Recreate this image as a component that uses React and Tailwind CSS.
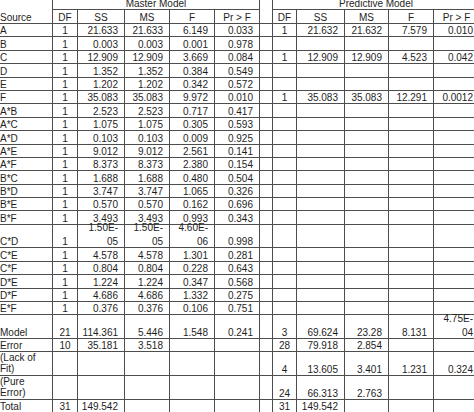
import React from 'react';

// column widths: Source, DF, SS, MS, F, Pr>F, gap, DF, SS, MS, F, Pr>F
const W = ['w-[53px]', 'w-[25px]', 'w-[47px]', 'w-[45px]', 'w-[45px]', 'w-[45px]', 'w-[13px]', 'w-[24px]', 'w-[48px]', 'w-[44px]', 'w-[45px]', 'w-[46px]'];

const rows = [
  { s: 'A', m: ['1', '21.633', '21.633', '6.149', '0.033'], p: ['1', '21.632', '21.632', '7.579', '0.010'] },
  { s: 'B', m: ['1', '0.003', '0.003', '0.001', '0.978'] },
  { s: 'C', m: ['1', '12.909', '12.909', '3.669', '0.084'], p: ['1', '12.909', '12.909', '4.523', '0.042'] },
  { s: 'D', m: ['1', '1.352', '1.352', '0.384', '0.549'] },
  { s: 'E', m: ['1', '1.202', '1.202', '0.342', '0.572'] },
  { s: 'F', m: ['1', '35.083', '35.083', '9.972', '0.010'], p: ['1', '35.083', '35.083', '12.291', '0.0012'] },
  { s: 'A*B', m: ['1', '2.523', '2.523', '0.717', '0.417'] },
  { s: 'A*C', m: ['1', '1.075', '1.075', '0.305', '0.593'] },
  { s: 'A*D', m: ['1', '0.103', '0.103', '0.009', '0.925'] },
  { s: 'A*E', m: ['1', '9.012', '9.012', '2.561', '0.141'] },
  { s: 'A*F', m: ['1', '8.373', '8.373', '2.380', '0.154'] },
  { s: 'B*C', m: ['1', '1.688', '1.688', '0.480', '0.504'] },
  { s: 'B*D', m: ['1', '3.747', '3.747', '1.065', '0.326'] },
  { s: 'B*E', m: ['1', '0.570', '0.570', '0.162', '0.696'] },
  { s: 'B*F', m: ['1', '3.493', '3.493', '0.993', '0.343'] },
  { s: 'C*D', tall: true, m: ['1', ['1.50E-', '05'], ['1.50E-', '05'], ['4.60E-', '06'], '0.998'] },
  { s: 'C*E', m: ['1', '4.578', '4.578', '1.301', '0.281'] },
  { s: 'C*F', m: ['1', '0.804', '0.804', '0.228', '0.643'] },
  { s: 'D*E', m: ['1', '1.224', '1.224', '0.347', '0.568'] },
  { s: 'D*F', m: ['1', '4.686', '4.686', '1.332', '0.275'] },
  { s: 'E*F', m: ['1', '0.376', '0.376', '0.106', '0.751'] },
  { s: 'Model', tall: true, m: ['21', '114.361', '5.446', '1.548', '0.241'], p: ['3', '69.624', '23.28', '8.131', ['4.75E-', '04']] },
  { s: 'Error', m: ['10', '35.181', '3.518', '', ''], p: ['28', '79.918', '2.854', '', ''] },
  { s: ['(Lack of', 'Fit)'], tall: true, m: ['', '', '', '', ''], p: ['4', '13.605', '3.401', '1.231', '0.324'] },
  { s: ['(Pure', 'Error)'], tall: true, m: ['', '', '', '', ''], p: ['24', '66.313', '2.763', '', ''] },
  { s: 'Total', m: ['31', '149.542', '', '', ''], p: ['31', '149.542', '', '', ''] },
];

const Cell = ({ i, v }) => {
  const align = i === 0 ? 'justify-start' : i === 1 || i === 7 ? 'justify-center' : 'justify-end pr-[6px]';
  return (
    <div className={`${W[i]} ${align} flex shrink-0 items-end border-r border-b border-[#4d4d4d] leading-[11px] whitespace-nowrap`}>
      {Array.isArray(v) ? (
        <span className={i === 0 ? 'leading-[11.5px]' : 'leading-[13.5px] text-right -mb-px'}>
          {v[0]}
          <br />
          {v[1]}
        </span>
      ) : (
        <span>{v}</span>
      )}
    </div>
  );
};

const Group = ({ title, start }) => (
  <div className="flex flex-col w-[207px] shrink-0">
    <div className="h-[9.5px] flex items-end justify-center border-r border-b border-[#4d4d4d] leading-[11px] whitespace-nowrap">
      {title}
    </div>
    <div className="flex h-[14.5px]">
      {['DF', 'SS', 'MS', 'F', 'Pr > F'].map((h, k) => (
        <div key={h} className={`${W[start + k]} flex shrink-0 items-end justify-center border-r border-b border-[#4d4d4d] leading-[11px]`}>
          {h}
        </div>
      ))}
    </div>
  </div>
);

export default function App() {
  return (
    <div className="w-[474px] h-[412px] overflow-hidden bg-white text-[#1e1e1e] text-[10px] font-['Liberation_Sans',Arial,sans-serif]">
      <div className="w-[480px]">
        <div className="flex">
          <div className={`${W[0]} h-[24px] flex shrink-0 items-end border-r border-b border-[#4d4d4d] leading-[11px]`}>Source</div>
          <Group title="Master Model" start={1} />
          <div className={`${W[6]} h-[24px] shrink-0 border-r border-b border-[#4d4d4d]`} />
          <Group title="Predictive Model" start={7} />
        </div>
        {rows.map((r, n) => {
          const cells = [r.s, ...r.m, '', ...(r.p || ['', '', '', '', ''])];
          return (
            <div key={n} className={`flex ${r.tall ? 'h-[23.6px]' : 'h-[13.4px]'}`}>
              {cells.map((v, i) => (
                <Cell key={i} i={i} v={v} />
              ))}
            </div>
          );
        })}
      </div>
    </div>
  );
}
